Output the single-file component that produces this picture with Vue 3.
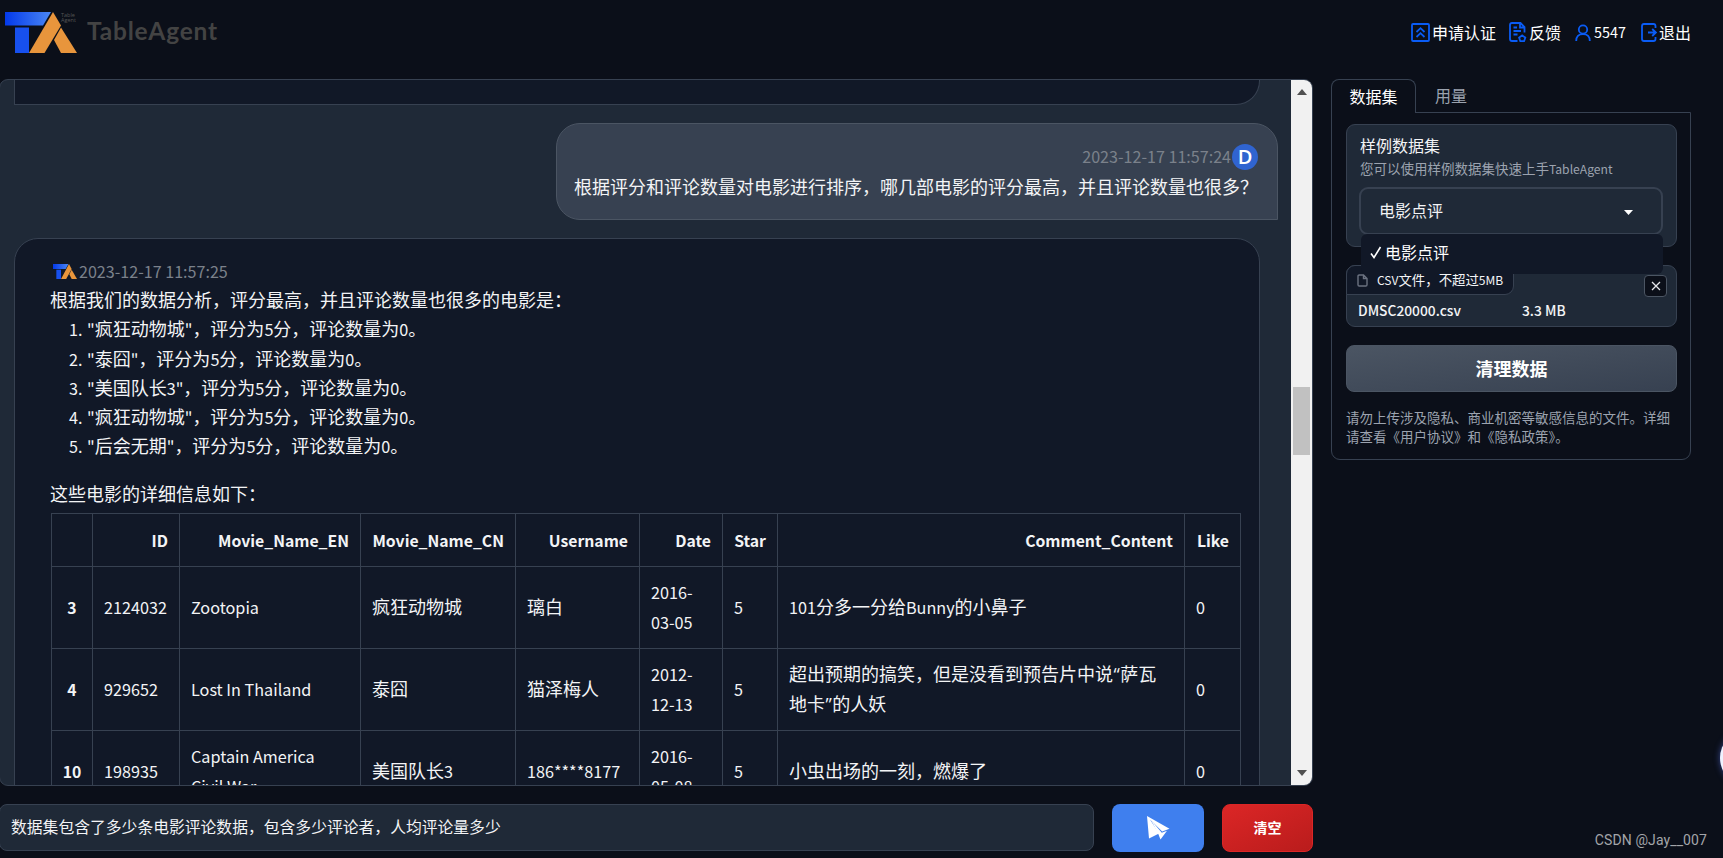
<template>
  <div class="page">
    <header class="topbar">
      <div class="brand">
        <svg class="brand-logo" viewBox="0 0 74 44">
          <defs>
            <linearGradient id="blue" x1="0" y1="0" x2="1" y2="0">
              <stop offset="0" stop-color="#0339ea" />
              <stop offset="1" stop-color="#4a86f3" />
            </linearGradient>
          </defs>
          <path d="M0 0H46L38 13.5H0Z" fill="url(#blue)" />
          <path d="M10 15.5H24V41H10Z" fill="#1750ee" />
          <path d="M48 0L56 13.5L39.5 41H24Z" fill="#e8953c" />
          <path d="M56 15.5L72 41H56L49 28Z" fill="#e8953c" />
          <text x="56" y="4.5" class="logo-note">Table</text>
          <text x="56" y="9.8" class="logo-note">Agent</text>
        </svg>
        <span class="brand-name">TableAgent</span>
      </div>

      <nav class="nav">
        <a class="nav-item auth">
          <svg width="19" height="19" viewBox="0 0 19 19">
            <rect x="1" y="1" width="17" height="17" rx="1" />
            <path d="M5.5 9L9.5 5.2L13.5 9M5.5 14L9.5 10.2L13.5 14" />
          </svg>
          申请认证
        </a>
        <a class="nav-item feedback">
          <svg width="18" height="21" viewBox="0 0 18 21">
            <path d="M8.5 19H3Q1 19 1 17V3Q1 1 3 1H11.5L15.5 5V10.5M11 1.5V5.5H15.5M4.5 5.5H8M4.5 9H12M4.5 12.5H8.5" />
            <path d="M13.2 13.4L16.3 15.6L15.1 19.2H11.3L10.1 15.6Z" />
          </svg>
          反馈
        </a>
        <a class="nav-item user">
          <svg width="16" height="18" viewBox="0 0 16 18">
            <circle cx="8" cy="5.5" r="4.2" />
            <path d="M1.2 17Q1.2 10.2 8 10.2T14.8 17" />
          </svg>
          <span class="lat">5547</span>
        </a>
        <a class="nav-item logout">
          <svg width="17" height="19" viewBox="0 0 17 19">
            <path d="M14.5 5V3Q14.5 1 12.5 1H3Q1 1 1 3V16Q1 18 3 18H12.5Q14.5 18 14.5 16V14M7 9.5H14.5M11.2 6L14.9 9.5L11.2 13" />
          </svg>
          退出
        </a>
      </nav>
    </header>

    <main class="body">
      <section class="left">
        <div class="chat">
          <div class="messages">
            <div class="bubble bot previous"></div>

            <div class="bubble mine">
              <div class="meta">
                <span class="time">2023-12-17 11:57:24</span>
                <span class="avatar">D</span>
              </div>
              <p>根据评分和评论数量对电影进行排序，哪几部电影的评分最高，并且评论数量也很多？</p>
            </div>

            <div class="bubble bot answer">
              <div class="meta">
                <svg class="mini-logo" viewBox="0 0 72 41" preserveAspectRatio="none">
                  <path d="M0 0H46L38 13.5H0Z" fill="url(#blue)" />
                  <path d="M10 15.5H24V41H10Z" fill="#1750ee" />
                  <path d="M48 0L56 13.5L39.5 41H24Z" fill="#e8953c" />
                  <path d="M56 15.5L72 41H56L49 28Z" fill="#e8953c" />
                </svg>
                <span class="time">2023-12-17 11:57:25</span>
              </div>
              <p>根据我们的数据分析，评分最高，并且评论数量也很多的电影是：</p>
              <ol>
                <li v-for="(m, i) in movies" :key="i">
                  <span class="no"><span class="lat">{{ i + 1 }}.</span></span>
                  <MixedText :text="`&quot;${m}&quot;，评分为5分，评论数量为0。`" />
                </li>
              </ol>
              <p class="detail">这些电影的详细信息如下：</p>

              <table>
                <colgroup>
                  <col v-for="(w, i) in widths" :key="i" :style="{ width: w + 'px' }" />
                </colgroup>
                <thead>
                  <tr>
                    <th></th>
                    <th v-for="c in columns" :key="c"><span class="lat">{{ c }}</span></th>
                  </tr>
                </thead>
                <tbody>
                  <tr v-for="r in rows" :key="r[0]">
                    <th><span class="lat">{{ r[0] }}</span></th>
                    <td v-for="(cell, i) in r.slice(1)" :key="i"><MixedText :text="cell" /></td>
                  </tr>
                </tbody>
              </table>
            </div>
          </div>

          <div class="scrollbar">
            <svg width="10" height="6" viewBox="0 0 10 6"><path d="M0 6L5 0L10 6Z" /></svg>
            <div class="track"><div class="thumb"></div></div>
            <svg width="10" height="6" viewBox="0 0 10 6"><path d="M0 0L5 6L10 0Z" /></svg>
          </div>
        </div>

        <div class="composer">
          <div class="input">数据集包含了多少条电影评论数据，包含多少评论者，人均评论量多少</div>
          <button class="send">
            <svg width="24" height="24" viewBox="0 0 24 24">
              <path d="M1 0L23.5 12.8L16.2 15.6L4 3.4L13 17.5L3 22.5Z" />
              <path d="M5 4L15.8 16.8L21 14.8L14.5 23.5L12.4 18.3Z" />
            </svg>
          </button>
          <button class="clear">清空</button>
        </div>
      </section>

      <aside class="side">
        <div class="tabs">
          <button class="tab active">数据集</button>
          <button class="tab">用量</button>
        </div>
        <div class="panel">
          <div class="card sample">
            <div class="card-title">样例数据集</div>
            <div class="card-hint"><MixedText text="您可以使用样例数据集快速上手TableAgent" /></div>
            <div class="select">
              <span>电影点评</span>
              <svg width="9" height="5" viewBox="0 0 9 5"><path d="M0 0H9L4.5 5Z" /></svg>
              <ul class="options">
                <li>
                  <svg width="12" height="13" viewBox="0 0 12 13"><path d="M1 7.5L4 11.5L10.5 1" /></svg>
                  电影点评
                </li>
              </ul>
            </div>
          </div>

          <div class="card file">
            <div class="file-label">
              <svg width="11" height="13" viewBox="0 0 11 13">
                <path d="M6.5 1H2.2Q1 1 1 2.2V10.8Q1 12 2.2 12H8.8Q10 12 10 10.8V4.5ZM6.5 1V4.5H10" />
              </svg>
              <MixedText text="CSV文件，不超过5MB" />
            </div>
            <span class="close">
              <svg width="10" height="10" viewBox="0 0 10 10"><path d="M1 1L9 9M9 1L1 9" /></svg>
            </span>
            <div class="file-row">
              <span class="file-name">DMSC20000.csv</span>
              <span>3.3 MB</span>
            </div>
          </div>

          <button class="clean">清理数据</button>
          <p class="notice">请勿上传涉及隐私、商业机密等敏感信息的文件。详细请查看《用户协议》和《隐私政策》。</p>
        </div>
      </aside>
    </main>

    <div class="float-ball"></div>
    <div class="watermark">CSDN @Jay__007</div>
  </div>
</template>

<script setup>
import { h } from 'vue';

// Latin runs sit a little smaller than the Chinese around them,
// curly quotes keep their narrow Latin form
const MixedText = (props) =>
  h(
    'span',
    props.text
      .split(/([\x20-\x7e]+|[“”])/)
      .filter(Boolean)
      .map((s) => {
        if (/^[“”]/.test(s)) return h('span', { class: 'quote' }, s);
        return /^[\x20-\x7e]/.test(s) ? h('span', { class: 'lat' }, s) : s;
      })
  );
MixedText.props = ['text'];

const movies = ['疯狂动物城', '泰囧', '美国队长3', '疯狂动物城', '后会无期'];

const widths = [41, 87, 181, 155, 124, 83, 55, 407, 56];
const columns = ['ID', 'Movie_Name_EN', 'Movie_Name_CN', 'Username', 'Date', 'Star', 'Comment_Content', 'Like'];
const rows = [
  ['3', '2124032', 'Zootopia', '疯狂动物城', '璃白', '2016-03-05', '5', '101分多一分给Bunny的小鼻子', '0'],
  ['4', '929652', 'Lost In Thailand', '泰囧', '猫泽梅人', '2012-12-13', '5', '超出预期的搞笑，但是没看到预告片中说“萨瓦地卡”的人妖', '0'],
  ['10', '198935', 'Captain America Civil War', '美国队长3', '186****8177', '2016-05-08', '5', '小虫出场的一刻，燃爆了', '0'],
];
</script>

<style>
body {
  background: #0b0f19;
  overflow: hidden;
}
.lat { font-size: .9em; line-height: 0; }
.quote { font-family: "Open Sans", sans-serif; line-height: 0; padding: 0 .5px; }
</style>

<style scoped>
* { box-sizing: border-box; }
.page {
  position: relative;
  width: 1723px;
  height: 858px;
  overflow: hidden;
  background: #0b0f19;
  color: #f3f4f6;
  font-family: "Noto Sans CJK SC", sans-serif;
  font-size: 16px;
}
p, ol, ul { margin: 0; padding: 0; list-style: none; }
button { font-family: inherit; color: inherit; padding: 0; border: none; background: none; }
svg { display: block; flex: none; }

/* header */
.topbar {
  height: 79px;
  display: flex;
  justify-content: space-between;
  padding: 12px 32px 0 5px;
}
.brand { display: flex; gap: 8px; }
.brand-logo { width: 74px; height: 44px; }
.logo-note { font: 5.5px "Open Sans", sans-serif; fill: #555; }
.brand-name {
  font: 700 24.5px/37px Lato, sans-serif;
  letter-spacing: .8px;
  color: #434343;
}
.nav { display: flex; height: 39px; align-items: center; color: #fff; }
.nav-item { display: flex; align-items: center; white-space: nowrap; }
.nav-item svg { fill: none; stroke: #0a5cf5; stroke-width: 1.8; margin-top: 2px; }
.auth { gap: 2px; margin-right: 13px; }
.feedback { gap: 2px; margin-right: 14px; }
.user { gap: 3px; margin-right: 15px; }
.logout { gap: 1px; }

/* chat */
.body { display: flex; gap: 18px; }
.left { width: 1314px; margin-left: -1px; flex: none; }
.chat {
  display: flex;
  height: 707px;
  border: 1px solid #374151;
  border-radius: 9px;
  background: #1f2937;
  overflow: hidden;
}
.messages {
  flex: 1;
  display: flex;
  flex-direction: column;
  gap: 18px;
  padding: 0 13px 0 14px;
  font-size: 18px;
  line-height: 29.25px;
}
.bubble { border: 1px solid #374151; border-radius: 24px; flex: none; }
.bot { width: 1246px; background: #111827; border-bottom-left-radius: 0; }
.previous { height: 25px; border-top: none; border-radius: 0 0 24px 0; }
.mine {
  align-self: flex-end;
  width: 722px;
  height: 97px;
  padding: 19px 17px;
  background: #374151;
  border-color: #4b5563;
  border-bottom-right-radius: 0;
}
.meta { display: flex; align-items: center; height: 28px; }
.mine .meta { justify-content: flex-end; padding-right: 2px; gap: 1px; margin-bottom: 1px; }
.time { font-size: 16.1px; color: #7b818b; }
.avatar {
  width: 26px;
  height: 26px;
  border-radius: 50%;
  background: #3064d0;
  color: #fff;
  font: 600 20px/26px "Open Sans", sans-serif;
  text-align: center;
}
.answer { height: 620px; padding: 19px 18px 0 35px; }
.answer .meta { padding-left: 3px; gap: 2px; margin-bottom: -1px; }
.mini-logo { width: 24px; height: 15px; margin-top: -2px; }
.answer li { display: flex; padding-left: 19px; }
.no { width: 18px; }
.detail { margin-top: 18px; }

table {
  width: 1190px;
  margin: 5px 0 0 1px;
  table-layout: fixed;
  border-collapse: collapse;
  line-height: 30px;
}
th, td { border: 1px solid #374151; padding: 0 11px 1px; text-align: left; }
td { padding-bottom: 3px; }
th { height: 53px; text-align: right; white-space: nowrap; }
th .lat { font-size: .875em; }
tbody th { text-align: center; padding: 0 0 2px; }
tbody tr { height: 82px; }

.scrollbar {
  width: 21px;
  background: #f1f1f1;
  display: flex;
  flex-direction: column;
  align-items: center;
  padding: 9px 0;
}
.scrollbar svg { fill: #505050; }
.track { flex: 1; padding-top: 292px; }
.thumb { width: 17px; height: 68px; background: #c1c1c1; }

.composer { display: flex; gap: 18px; margin-top: 18px; }
.input {
  width: 1095px;
  height: 47px;
  padding-left: 11px;
  border: 1px solid #374151;
  border-radius: 8px;
  background: #1f2937;
  font-size: 15.8px;
  line-height: 43px;
}
.send, .clear { height: 48px; border-radius: 8px; }
.send {
  width: 92px;
  background: #3f7fee;
  display: flex;
  align-items: center;
  justify-content: center;
}
.send svg { fill: #fff; }
.clear {
  width: 91px;
  padding-bottom: 3px;
  border: 1px solid #dc2626;
  background: linear-gradient(to bottom right, #dc2626, #b91c1c);
  color: #fff;
  font-size: 14px;
  font-weight: 600;
}

/* sidebar */
.side { width: 360px; }
.tabs { display: flex; height: 34px; position: relative; z-index: 1; margin-bottom: -1px; }
.tab { width: 70px; font-size: 16px; line-height: 32px; color: #9ca3af; padding: 0 0 2px; }
.tab.active {
  width: 85px;
  color: #fff;
  border: 1px solid #374151;
  border-bottom: none;
  border-radius: 8px 8px 0 0;
  background: #0b0f19;
}
.panel {
  height: 348px;
  padding: 11px 13px 0 14px;
  border: 1px solid #374151;
  border-radius: 0 0 9px 9px;
}
.card { border: 1px solid #374151; border-radius: 9px; background: #1f2937; }
.sample { height: 123px; padding: 9px 13px 0 12px; }
.card-title { font-size: 16px; line-height: 23px; padding-left: 1px; }
.card-hint { font-size: 13.5px; line-height: 22px; color: #9ca3af; padding-left: 1px; }
.select {
  position: relative;
  display: flex;
  align-items: center;
  justify-content: space-between;
  height: 48px;
  margin-top: 8px;
  padding: 0 28px 0 18px;
  border: 2px solid #374151;
  border-radius: 9px;
}
.select > span { margin-top: -2px; }
.select > svg { fill: #fff; margin-top: 2px; }
.options {
  position: absolute;
  z-index: 2;
  top: 45px;
  left: 0;
  right: -2px;
  height: 40px;
  padding-left: 9px;
  border-radius: 6px;
  background: #111827;
  line-height: 37px;
  color: #fff;
}
.options li { display: flex; align-items: center; gap: 3px; }
.options svg { fill: none; stroke: #fff; stroke-width: 1.6; }

.file { position: relative; height: 62px; margin-top: 18px; font-size: 14px; }
.file-label {
  display: flex;
  align-items: center;
  gap: 9px;
  width: 168px;
  height: 30px;
  margin: -1px 0 0 -1px;
  padding: 0 0 3px 10px;
  border: 1px solid #374151;
  border-radius: 9px 0 9px 0;
  background: #111827;
  font-size: 13.4px;
}
.file-label svg { fill: none; stroke: #6b7280; stroke-width: 1.4; margin-top: 3px; }
.close {
  position: absolute;
  top: 9px;
  right: 9px;
  width: 23px;
  height: 22px;
  display: flex;
  align-items: center;
  justify-content: center;
  border: 1px solid #4b5563;
  border-radius: 4px;
  background: #0b0f19;
}
.close svg { stroke: #e5e7eb; stroke-width: 1.3; }
.file-row { display: flex; line-height: 31px; padding-left: 11px; font-size: 13.8px; font-weight: 500; }
.file-name { width: 164px; }

.clean {
  display: block;
  width: 100%;
  height: 47px;
  margin-top: 18px;
  padding-bottom: 2px;
  border: 1px solid #4b5563;
  border-radius: 8px;
  background: linear-gradient(to bottom right, #4b5563, #374151);
  color: #fff;
  font-size: 18px;
  font-weight: 700;
}
.notice { margin-top: 16px; font-size: 13.5px; line-height: 19px; color: #9ca3af; }

.float-ball {
  position: absolute;
  left: 1720px;
  top: 730px;
  width: 56px;
  height: 56px;
  border-radius: 50%;
  background: #eef2ff;
  box-shadow: 0 0 6px rgba(99, 130, 255, .5);
}
.watermark {
  position: absolute;
  right: 16px;
  bottom: 8px;
  font: 14px/20px Roboto, sans-serif;
  letter-spacing: .1px;
  color: #a3a5a9;
}
</style>
